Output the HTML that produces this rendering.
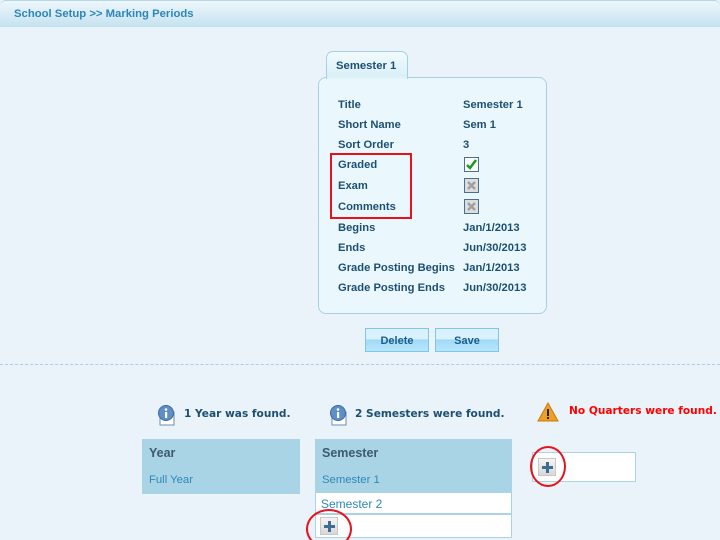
<!DOCTYPE html>
<html style="overflow:hidden;height:540px"><head><style>
*{margin:0;padding:0;box-sizing:border-box}
body{width:720px;height:540px;background:#eaf3f9;font-family:"Liberation Sans",Arial,sans-serif;position:relative;overflow:hidden}
.a{position:absolute;white-space:nowrap}
.hdr{left:0;top:0;width:720px;height:27px;background:linear-gradient(#eef7fc,#c4e2f0);border-top:1px solid #b5d6e6;border-radius:6px 6px 0 0;color:#2b86b9;font-size:11.3px;font-weight:bold;padding:7px 0 0 14px}
.lbl{font-size:11.2px;font-weight:bold;color:#1d4f73}
.btn{height:24px;width:64px;border:1px solid #7cc6ea;background:linear-gradient(#d9f1fc 0,#d9f1fc 45%,#9fdaf6 50%,#b8e5fa 100%);color:#1d5c88;font-size:11px;font-weight:bold;text-align:center;line-height:24px}
.plus{width:18px;height:18px;background:linear-gradient(#f4f4f4,#d8d8d8);border:1px solid #c8c8c8}
.plus:before{content:"";position:absolute;left:7px;top:3px;width:3px;height:11px;background:#3e6c92}
.plus:after{content:"";position:absolute;left:3px;top:7px;width:11px;height:3px;background:#3e6c92}
.ell{border:2px solid #e8121d;border-radius:50%}
.cb{width:15px;height:15px;border:1px solid #4b6f90;background:#eee}
.st{font-family:"DejaVu Sans",sans-serif;font-size:10.6px;font-weight:bold;color:#1d4f73}
</style></head><body>
<div class="a hdr">School Setup &gt;&gt; Marking Periods</div>

<div class="a" style="left:318px;top:77px;width:229px;height:237px;background:#eaf8fd;border:1px solid #a8cfe0;border-radius:8px"></div>
<div class="a" style="left:326px;top:51px;width:82px;height:28px;background:linear-gradient(#f2fbfe,#d6eef7);border:1px solid #a8cfe0;border-bottom:none;border-radius:7px 7px 0 0;font-size:11.3px;font-weight:bold;color:#1d4f73;padding:8px 0 0 9px">Semester 1</div>
<div class="a" style="left:327px;top:77px;width:80px;height:2px;background:#e2f3fa"></div>

<div class="a lbl" style="left:338px;top:99px">Title</div><div class="a lbl" style="left:463px;top:99px">Semester 1</div>
<div class="a lbl" style="left:338px;top:119px">Short Name</div><div class="a lbl" style="left:463px;top:119px">Sem 1</div>
<div class="a lbl" style="left:338px;top:139px">Sort Order</div><div class="a lbl" style="left:463px;top:139px">3</div>
<div class="a lbl" style="left:338px;top:159px">Graded</div>
<div class="a lbl" style="left:338px;top:180px">Exam</div>
<div class="a lbl" style="left:338px;top:201px">Comments</div>
<div class="a lbl" style="left:338px;top:222px">Begins</div><div class="a lbl" style="left:463px;top:222px">Jan/1/2013</div>
<div class="a lbl" style="left:338px;top:242px">Ends</div><div class="a lbl" style="left:463px;top:242px">Jun/30/2013</div>
<div class="a lbl" style="left:338px;top:262px">Grade Posting Begins</div><div class="a lbl" style="left:463px;top:262px">Jan/1/2013</div>
<div class="a lbl" style="left:338px;top:282px">Grade Posting Ends</div><div class="a lbl" style="left:463px;top:282px">Jun/30/2013</div>
<div class="a" style="left:330px;top:153px;width:82px;height:66px;border:2px solid #e8121d"></div>
<div class="a cb" style="left:464px;top:157px;background:#fff"><svg width="13" height="13" style="position:absolute;left:0;top:0"><path d="M2 7 L5 10 L11 2" stroke="#1a9a1a" stroke-width="2.5" fill="none"/></svg></div>
<div class="a cb" style="left:464px;top:178px;background:#ddd"><svg width="13" height="13" style="position:absolute;left:0;top:0"><path d="M3 3L10 10M10 3L3 10" stroke="#a0a0a0" stroke-width="2.5"/></svg></div>
<div class="a cb" style="left:464px;top:199px;background:#ddd"><svg width="13" height="13" style="position:absolute;left:0;top:0"><path d="M3 3L10 10M10 3L3 10" stroke="#a0a0a0" stroke-width="2.5"/></svg></div>

<div class="a btn" style="left:365px;top:328px">Delete</div>
<div class="a btn" style="left:435px;top:328px">Save</div>
<div class="a" style="left:0;top:364px;width:720px;border-top:1px dashed #a9cfe0"></div>

<svg class="a" style="left:157px;top:404px" width="20" height="22"><rect x="3" y="8" width="14" height="13" fill="#fff" stroke="#6a8fb0"/><circle cx="9" cy="9" r="7.5" fill="#5f8fc7" stroke="#3b6aa0"/><circle cx="9" cy="5.5" r="1.3" fill="#fff"/><rect x="8" y="8" width="2.2" height="6" fill="#fff"/></svg>
<div class="a st" style="left:184px;top:408px">1 Year was found.</div>
<svg class="a" style="left:329px;top:404px" width="20" height="22"><rect x="3" y="8" width="14" height="13" fill="#fff" stroke="#6a8fb0"/><circle cx="9" cy="9" r="7.5" fill="#5f8fc7" stroke="#3b6aa0"/><circle cx="9" cy="5.5" r="1.3" fill="#fff"/><rect x="8" y="8" width="2.2" height="6" fill="#fff"/></svg>
<div class="a st" style="left:355px;top:408px">2 Semesters were found.</div>
<svg class="a" style="left:537px;top:402px" width="22" height="20"><path d="M11 1 L21 19 L1 19 Z" fill="#f0a020" stroke="#c87a10"/><rect x="10" y="7" width="2" height="7" fill="#222"/><rect x="10" y="15" width="2" height="2" fill="#222"/></svg>
<div class="a st" style="left:569px;top:405px;color:#f00">No Quarters were found.</div>

<div class="a" style="left:142px;top:439px;width:158px;height:55px;background:#a8d4e6"></div>
<div class="a" style="left:149px;top:446px;font-size:12.5px;font-weight:bold;color:#3e5a6e">Year</div>
<div class="a" style="left:149px;top:474px;font-size:11.3px;color:#2e87b7">Full Year</div>

<div class="a" style="left:315px;top:439px;width:197px;height:55px;background:#a8d4e6"></div>
<div class="a" style="left:322px;top:446px;font-size:12.5px;font-weight:bold;color:#3e5a6e">Semester</div>
<div class="a" style="left:322px;top:474px;font-size:11.3px;color:#2e87b7">Semester 1</div>
<div class="a" style="left:315px;top:493px;width:197px;height:21px;background:#fff;border:1px solid #a8d4e6;border-top:none"></div>
<div class="a" style="left:321px;top:497px;font-size:12px;color:#2e87b7">Semester 2</div>
<div class="a" style="left:315px;top:514px;width:197px;height:24px;background:#fff;border:1px solid #a8d4e6"></div>
<div class="a plus" style="left:320px;top:517px"></div>
<div class="a ell" style="left:306px;top:509px;width:46px;height:40px"></div>

<div class="a" style="left:532px;top:452px;width:104px;height:30px;background:#fff;border:1px solid #a8d4e6"></div>
<div class="a plus" style="left:538px;top:458px"></div>
<div class="a ell" style="left:530px;top:446px;width:36px;height:41px"></div>
</body></html>
